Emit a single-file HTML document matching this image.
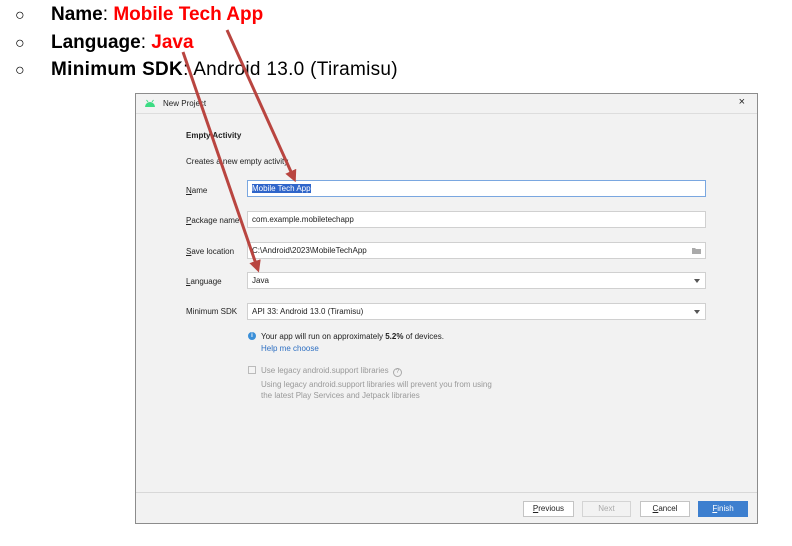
<!DOCTYPE html>
<html><head><meta charset="utf-8"><style>
*{margin:0;padding:0;box-sizing:border-box}
body{width:792px;height:546px;background:#fff;position:relative;overflow:hidden;font-family:"Liberation Sans",sans-serif}
.b{position:absolute;left:15px;font-family:"Liberation Sans",sans-serif;font-size:19px;color:#000}
.b .o{position:absolute;left:0;top:0;font-size:16px}
.b .t{position:absolute;left:36px;white-space:nowrap}
.r{color:#f00;font-weight:bold}
.dlg{position:absolute;left:135px;top:93px;width:623px;height:431px;background:#f2f2f2;border:1px solid #8c8c8c}
.tb{position:absolute;left:0;top:0;width:100%;height:20px;border-bottom:1px solid #ddd;font-size:8px;color:#222}
.a{position:absolute;font-size:8px;color:#222;white-space:nowrap}
.f{position:absolute;left:111px;width:459px;height:17px;background:#fff;border:1px solid #d0d0d0;font-size:8px;padding:3px 4px;color:#222}
.dd{position:absolute;right:5px;top:6px;width:0;height:0;border-left:3px solid transparent;border-right:3px solid transparent;border-top:4px solid #555}
.btn{position:absolute;top:407px;height:16px;background:#fff;border:1px solid #c4c4c4;font-size:8px;text-align:center;line-height:14px;color:#222}
u{text-decoration:underline}
</style></head><body>
<div class="b" style="top:4px"><span class="o" style="top:3px">○</span><span class="t"><b>Name</b>: <span class="r">Mobile Tech App</span></span></div>
<div class="b" style="top:32px"><span class="o" style="top:3px">○</span><span class="t"><b>Language</b>: <span class="r">Java</span></span></div>
<div class="b" style="top:59px"><span class="o" style="top:3px">○</span><span class="t" style="letter-spacing:0.3px"><b>Minimum SDK</b>: Android 13.0 (Tiramisu)</span></div>

<div class="dlg">
 <div class="tb">
  <svg style="position:absolute;left:8px;top:5px" width="12" height="8" viewBox="0 0 12 8"><path d="M1 8 A5 5 0 0 1 11 8Z" fill="#3ddc84"/><path d="M2.5 1L4 3M9.5 1L8 3" stroke="#3ddc84" stroke-width="1"/></svg>
  <span style="position:absolute;left:27px;top:5px">New Project</span>
  <span style="position:absolute;right:12px;top:2px;font-size:11px">×</span>
 </div>
 <div class="a" style="left:50px;top:37px;font-weight:bold">Empty Activity</div>
 <div class="a" style="left:50px;top:63px">Creates a new empty activity</div>
 <div class="a" style="left:50px;top:92px"><u>N</u>ame</div>
 <div class="f" style="top:86px;border-color:#7aa7e0"><span style="background:#2f65ca;color:#fff">Mobile Tech App</span></div>
 <div class="a" style="left:50px;top:122px"><u>P</u>ackage name</div>
 <div class="f" style="top:117px">com.example.mobiletechapp</div>
 <div class="a" style="left:50px;top:153px"><u>S</u>ave location</div>
 <div class="f" style="top:148px">C:\Android\2023\MobileTechApp<svg style="position:absolute;right:4px;top:4px" width="9" height="7"><path d="M0 1h3l1 1h5v5H0z" fill="#aaa"/></svg></div>
 <div class="a" style="left:50px;top:183px"><u>L</u>anguage</div>
 <div class="f" style="top:178px">Java<span class="dd"></span></div>
 <div class="a" style="left:50px;top:213px">Minimum SDK</div>
 <div class="f" style="top:209px">API 33: Android 13.0 (Tiramisu)<span class="dd"></span></div>
 <div style="position:absolute;left:112px;top:238px;width:8px;height:8px;border-radius:50%;background:#3a8fd8;color:#fff;font-size:6px;text-align:center;line-height:8px;font-weight:bold">i</div>
 <div class="a" style="left:125px;top:238px">Your app will run on approximately <b>5.2%</b> of devices.</div>
 <div class="a" style="left:125px;top:250px;color:#2d6fc2">Help me choose</div>
 <div style="position:absolute;left:112px;top:272px;width:8px;height:8px;border:1px solid #bbb;background:#f4f4f4"></div>
 <div class="a" style="left:125px;top:272px;color:#999">Use legacy android.support libraries &nbsp;<span style="display:inline-block;width:9px;height:9px;border:1px solid #aaa;border-radius:50%;font-size:6px;text-align:center;line-height:7px">?</span></div>
 <div class="a" style="left:125px;top:286px;color:#999">Using legacy android.support libraries will prevent you from using</div>
 <div class="a" style="left:125px;top:297px;color:#999">the latest Play Services and Jetpack libraries</div>
 <div style="position:absolute;left:0;top:398px;width:100%;height:1px;background:#d8d8d8"></div>
 <div class="btn" style="left:387px;width:51px"><u>P</u>revious</div>
 <div class="btn" style="left:446px;width:49px;color:#aaa;background:#f2f2f2;border-color:#d4d4d4">Next</div>
 <div class="btn" style="left:504px;width:50px"><u>C</u>ancel</div>
 <div class="btn" style="left:562px;width:50px;background:#3d7fcf;border-color:#3d7fcf;color:#fff"><u>F</u>inish</div>
</div>

<svg style="position:absolute;left:0;top:0" width="792" height="546">
 <defs><marker id="m" markerWidth="4" markerHeight="4" refX="1" refY="2" orient="auto" markerUnits="strokeWidth"><path d="M0 0L4 2L0 4Z" fill="#b94540"/></marker></defs>
 <line x1="227" y1="30" x2="292" y2="174" stroke="#b94540" stroke-width="3" marker-end="url(#m)"/>
 <line x1="183" y1="52" x2="256" y2="264" stroke="#b94540" stroke-width="3" marker-end="url(#m)"/>
</svg>
</body></html>
